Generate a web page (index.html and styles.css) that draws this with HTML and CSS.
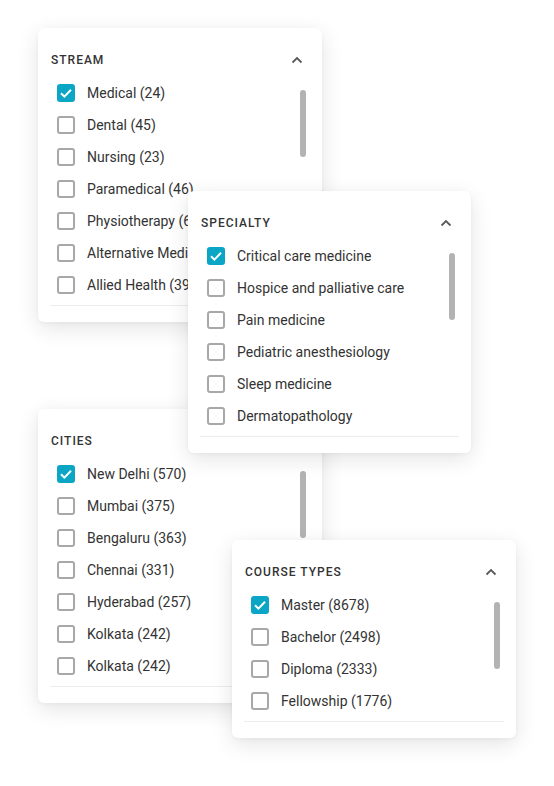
FILE: index.html
```html
<!DOCTYPE html>
<html>
<head>
<meta charset="utf-8">
<link rel="stylesheet" href="styles.css">
</head>
<body>
<div class="canvas">

  <section class="card card-stream">
    <div class="card-head"><span class="title">Stream</span>
      <svg class="chev" width="12" height="8" viewBox="0 0 12 8"><polyline points="1.5,6.5 6,2 10.5,6.5" fill="none" stroke="#5a5a5a" stroke-width="1.8"/></svg>
    </div>
    <div class="list">
      <label class="row"><span class="box on"><svg width="18" height="18" viewBox="0 0 18 18"><polyline points="4,9.2 7.4,12.6 14,5.8" fill="none" stroke="#fff" stroke-width="2"/></svg></span><span class="txt">Medical (24)</span></label>
      <label class="row"><span class="box"></span><span class="txt">Dental (45)</span></label>
      <label class="row"><span class="box"></span><span class="txt">Nursing (23)</span></label>
      <label class="row"><span class="box"></span><span class="txt">Paramedical (46)</span></label>
      <label class="row"><span class="box"></span><span class="txt">Physiotherapy (61)</span></label>
      <label class="row"><span class="box"></span><span class="txt">Alternative Medicine (12)</span></label>
      <label class="row"><span class="box"></span><span class="txt">Allied Health (39)</span></label>
      <span class="scroll"></span>
    </div>
    <div class="divider"></div>
  </section>

  <section class="card card-cities">
    <div class="card-head"><span class="title">Cities</span></div>
    <div class="list">
      <label class="row"><span class="box on"><svg width="18" height="18" viewBox="0 0 18 18"><polyline points="4,9.2 7.4,12.6 14,5.8" fill="none" stroke="#fff" stroke-width="2"/></svg></span><span class="txt">New Delhi (570)</span></label>
      <label class="row"><span class="box"></span><span class="txt">Mumbai (375)</span></label>
      <label class="row"><span class="box"></span><span class="txt">Bengaluru (363)</span></label>
      <label class="row"><span class="box"></span><span class="txt">Chennai (331)</span></label>
      <label class="row"><span class="box"></span><span class="txt">Hyderabad (257)</span></label>
      <label class="row"><span class="box"></span><span class="txt">Kolkata (242)</span></label>
      <label class="row"><span class="box"></span><span class="txt">Kolkata (242)</span></label>
      <span class="scroll"></span>
    </div>
    <div class="divider"></div>
  </section>

  <section class="card card-specialty">
    <div class="card-head"><span class="title">Specialty</span>
      <svg class="chev" width="12" height="8" viewBox="0 0 12 8"><polyline points="1.5,6.5 6,2 10.5,6.5" fill="none" stroke="#5a5a5a" stroke-width="1.8"/></svg>
    </div>
    <div class="list">
      <label class="row"><span class="box on"><svg width="18" height="18" viewBox="0 0 18 18"><polyline points="4,9.2 7.4,12.6 14,5.8" fill="none" stroke="#fff" stroke-width="2"/></svg></span><span class="txt">Critical care medicine</span></label>
      <label class="row"><span class="box"></span><span class="txt">Hospice and palliative care</span></label>
      <label class="row"><span class="box"></span><span class="txt">Pain medicine</span></label>
      <label class="row"><span class="box"></span><span class="txt">Pediatric anesthesiology</span></label>
      <label class="row"><span class="box"></span><span class="txt">Sleep medicine</span></label>
      <label class="row"><span class="box"></span><span class="txt">Dermatopathology</span></label>
      <span class="scroll"></span>
    </div>
    <div class="divider"></div>
  </section>

  <section class="card card-course">
    <div class="card-head"><span class="title">Course Types</span>
      <svg class="chev" width="12" height="8" viewBox="0 0 12 8"><polyline points="1.5,6.5 6,2 10.5,6.5" fill="none" stroke="#5a5a5a" stroke-width="1.8"/></svg>
    </div>
    <div class="list">
      <label class="row"><span class="box on"><svg width="18" height="18" viewBox="0 0 18 18"><polyline points="4,9.2 7.4,12.6 14,5.8" fill="none" stroke="#fff" stroke-width="2"/></svg></span><span class="txt">Master (8678)</span></label>
      <label class="row"><span class="box"></span><span class="txt">Bachelor (2498)</span></label>
      <label class="row"><span class="box"></span><span class="txt">Diploma (2333)</span></label>
      <label class="row"><span class="box"></span><span class="txt">Fellowship (1776)</span></label>
      <span class="scroll"></span>
    </div>
    <div class="divider"></div>
  </section>

</div>
</body>
</html>
```
FILE: styles.css
```css
* { box-sizing: border-box; }
html, body { margin: 0; padding: 0; background: #fff; }
body { font-family: Roboto, "Liberation Sans", sans-serif; color: #333; }

.canvas { position: relative; width: 554px; height: 786px; overflow: hidden; }

.card {
  position: absolute;
  background: #fff;
  border-radius: 6px;
  box-shadow: 0 6px 22px rgba(0, 0, 0, 0.11), 0 1px 4px rgba(0, 0, 0, 0.04);
  padding: 21px 12px 16px;
  overflow: hidden;
}
.card-stream { left: 38px; top: 28px; width: 284px; height: 294px; }
.card-cities { left: 38px; top: 409px; width: 284px; height: 294px; }
.card-specialty { left: 188px; top: 191px; width: 283px; height: 262px; }
.card-course { left: 232px; top: 540px; width: 284px; height: 198px; }

.card-head {
  display: flex;
  align-items: center;
  justify-content: space-between;
  height: 22px;
  padding: 0 7px 0 1px;
}
.title {
  font-size: 12px;
  font-weight: 500;
  letter-spacing: 1px;
  text-transform: uppercase;
  color: #333;
}
.chev { display: block; }

.list {
  position: relative;
  margin-top: 6px;
  padding-bottom: 4px;
}
.row {
  display: flex;
  align-items: center;
  height: 32px;
  padding-left: 7px;
  gap: 12px;
  white-space: nowrap;
}
.box {
  width: 18px;
  height: 18px;
  flex: none;
  border: 2px solid #a8a8a8;
  border-radius: 3px;
  background: #fff;
}
.box.on {
  border: none;
  background: #0ba5c6;
}
.box svg { display: block; }
.txt { font-size: 14px; color: #333; }

.scroll {
  position: absolute;
  right: 4px;
  top: 13px;
  width: 6px;
  height: 67px;
  border-radius: 3px;
  background: #b3b3b3;
}

.divider { height: 1px; background: #ececec; }
```
